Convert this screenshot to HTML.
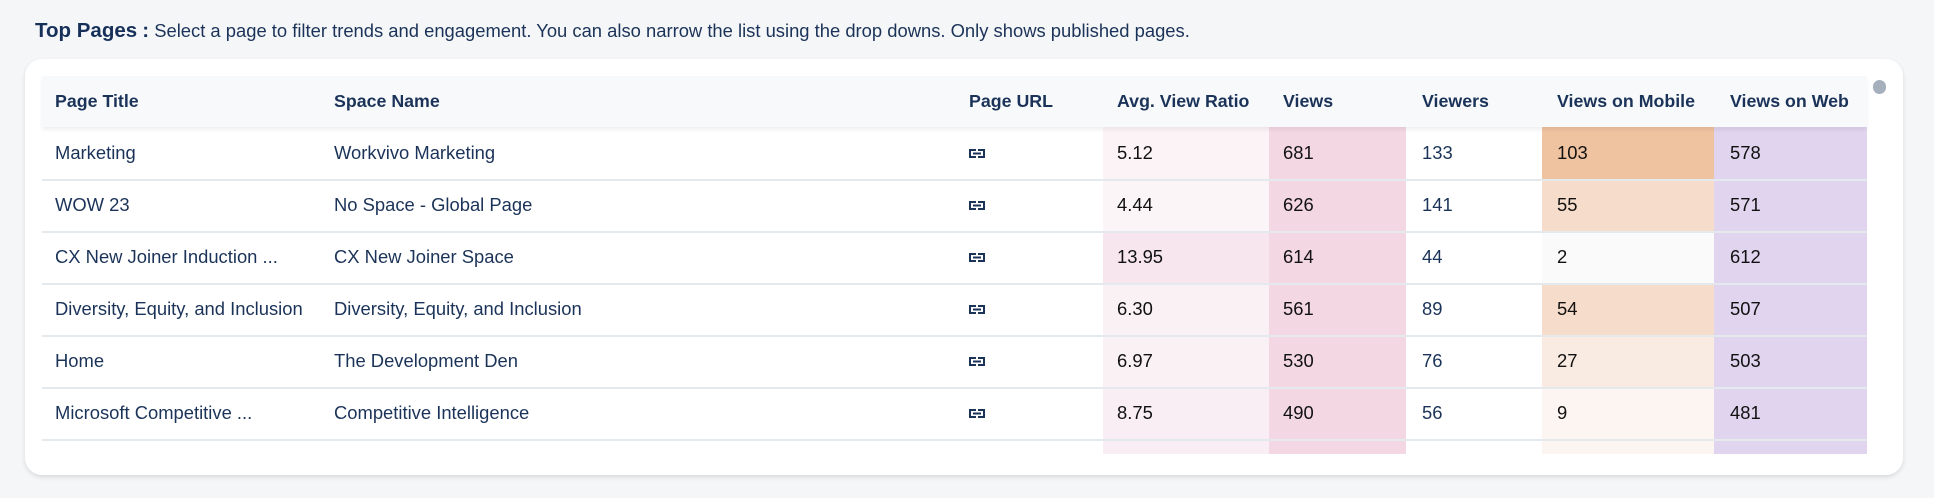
<!DOCTYPE html>
<html><head><meta charset="utf-8"><style>
*{margin:0;padding:0;box-sizing:border-box}
body{width:1934px;height:498px;background:#f5f6f8;font-family:"Liberation Sans",sans-serif;color:#1b3358;position:relative;overflow:hidden}
.hd{position:absolute;left:35px;top:19px;font-size:18.4px;white-space:nowrap}
.hd b{font-size:20.5px;font-weight:bold;color:#17305a}
.card{position:absolute;left:25px;top:59px;width:1878px;height:416px;background:#fff;border-radius:17px;box-shadow:0 2px 5px rgba(0,0,0,.12)}
.dot{position:absolute;left:1873px;top:80px;width:13px;height:14px;border-radius:7px;background:#a6afbc}
.tbl{position:absolute;left:42px;top:76px;width:1825px}
.row{position:absolute;left:0;width:1825px;height:52px}
.head{top:0;height:51px;background:#f8f9fb;box-shadow:0 3px 4px rgba(0,0,0,.06);font-weight:bold;font-size:17.8px;z-index:2}
.c{position:absolute;top:0;height:100%;display:flex;align-items:center;font-size:18.4px;white-space:nowrap}
.head .c{font-size:17.8px}
.line{position:absolute;left:0;width:1825px;height:2px;background:#e4e9ee;z-index:1}
.bg{position:absolute}
.ic{width:16px;height:9px}
</style></head><body>
<div class="hd"><b>Top Pages</b> <b>:</b> Select a page to filter trends and engagement. You can also narrow the list using the drop downs. Only shows published pages.</div>
<div class="card"></div>
<div class="dot"></div>
<div class="tbl">
<div class="row head">
<div class="c" style="left:13px">Page Title</div>
<div class="c" style="left:292px">Space Name</div>
<div class="c" style="left:927px">Page URL</div>
<div class="c" style="left:1075px">Avg. View Ratio</div>
<div class="c" style="left:1241px">Views</div>
<div class="c" style="left:1380px">Viewers</div>
<div class="c" style="left:1515px">Views on Mobile</div>
<div class="c" style="left:1688px">Views on Web</div>
</div>
<div class="bg" style="left:1061px;top:51px;width:166px;height:53px;background:#fbf3f6"></div>
<div class="bg" style="left:1061px;top:104px;width:166px;height:52px;background:#fbf5f7"></div>
<div class="bg" style="left:1061px;top:156px;width:166px;height:52px;background:#f7e6ee"></div>
<div class="bg" style="left:1061px;top:208px;width:166px;height:52px;background:#faf1f4"></div>
<div class="bg" style="left:1061px;top:260px;width:166px;height:52px;background:#f9f1f4"></div>
<div class="bg" style="left:1061px;top:312px;width:166px;height:66px;background:#f9eef3"></div>
<div class="bg" style="left:1227px;top:51px;width:137px;height:327px;background:#f3d7e3"></div>
<div class="bg" style="left:1500px;top:51px;width:172px;height:53px;background:#efc3a0"></div>
<div class="bg" style="left:1500px;top:104px;width:172px;height:52px;background:#f6dcca"></div>
<div class="bg" style="left:1500px;top:156px;width:172px;height:52px;background:#fbfafa"></div>
<div class="bg" style="left:1500px;top:208px;width:172px;height:52px;background:#f5dccb"></div>
<div class="bg" style="left:1500px;top:260px;width:172px;height:52px;background:#faebe2"></div>
<div class="bg" style="left:1500px;top:312px;width:172px;height:66px;background:#fcf5f1"></div>
<div class="bg" style="left:1672px;top:51px;width:153px;height:327px;background:#e0d4ee"></div>
<div class="line" style="top:103px"></div>
<div class="line" style="top:155px"></div>
<div class="line" style="top:207px"></div>
<div class="line" style="top:259px"></div>
<div class="line" style="top:311px"></div>
<div class="line" style="top:363px"></div>

<div class="row" style="top:51px;z-index:1">
<div class="c" style="left:13px">Marketing</div><div class="c" style="left:292px">Workvivo Marketing</div>
<div class="c" style="left:927px"><svg class="ic" viewBox="0 0 16 9"><path d="M7 1H1v7h6M9 1h6v7H9M4 4.5h8" fill="none" stroke="#1b3358" stroke-width="2"/></svg></div>
<div class="c" style="left:1075px;color:#111">5.12</div><div class="c" style="left:1241px;color:#111">681</div><div class="c" style="left:1380px">133</div><div class="c" style="left:1515px;color:#111">103</div><div class="c" style="left:1688px;color:#111">578</div></div>
<div class="row" style="top:103px;z-index:1">
<div class="c" style="left:13px">WOW 23</div><div class="c" style="left:292px">No Space - Global Page</div>
<div class="c" style="left:927px"><svg class="ic" viewBox="0 0 16 9"><path d="M7 1H1v7h6M9 1h6v7H9M4 4.5h8" fill="none" stroke="#1b3358" stroke-width="2"/></svg></div>
<div class="c" style="left:1075px;color:#111">4.44</div><div class="c" style="left:1241px;color:#111">626</div><div class="c" style="left:1380px">141</div><div class="c" style="left:1515px;color:#111">55</div><div class="c" style="left:1688px;color:#111">571</div></div>
<div class="row" style="top:155px;z-index:1">
<div class="c" style="left:13px">CX New Joiner Induction ...</div><div class="c" style="left:292px">CX New Joiner Space</div>
<div class="c" style="left:927px"><svg class="ic" viewBox="0 0 16 9"><path d="M7 1H1v7h6M9 1h6v7H9M4 4.5h8" fill="none" stroke="#1b3358" stroke-width="2"/></svg></div>
<div class="c" style="left:1075px;color:#111">13.95</div><div class="c" style="left:1241px;color:#111">614</div><div class="c" style="left:1380px">44</div><div class="c" style="left:1515px;color:#111">2</div><div class="c" style="left:1688px;color:#111">612</div></div>
<div class="row" style="top:207px;z-index:1">
<div class="c" style="left:13px">Diversity, Equity, and Inclusion</div><div class="c" style="left:292px">Diversity, Equity, and Inclusion</div>
<div class="c" style="left:927px"><svg class="ic" viewBox="0 0 16 9"><path d="M7 1H1v7h6M9 1h6v7H9M4 4.5h8" fill="none" stroke="#1b3358" stroke-width="2"/></svg></div>
<div class="c" style="left:1075px;color:#111">6.30</div><div class="c" style="left:1241px;color:#111">561</div><div class="c" style="left:1380px">89</div><div class="c" style="left:1515px;color:#111">54</div><div class="c" style="left:1688px;color:#111">507</div></div>
<div class="row" style="top:259px;z-index:1">
<div class="c" style="left:13px">Home</div><div class="c" style="left:292px">The Development Den</div>
<div class="c" style="left:927px"><svg class="ic" viewBox="0 0 16 9"><path d="M7 1H1v7h6M9 1h6v7H9M4 4.5h8" fill="none" stroke="#1b3358" stroke-width="2"/></svg></div>
<div class="c" style="left:1075px;color:#111">6.97</div><div class="c" style="left:1241px;color:#111">530</div><div class="c" style="left:1380px">76</div><div class="c" style="left:1515px;color:#111">27</div><div class="c" style="left:1688px;color:#111">503</div></div>
<div class="row" style="top:311px;z-index:1">
<div class="c" style="left:13px">Microsoft Competitive ...</div><div class="c" style="left:292px">Competitive Intelligence</div>
<div class="c" style="left:927px"><svg class="ic" viewBox="0 0 16 9"><path d="M7 1H1v7h6M9 1h6v7H9M4 4.5h8" fill="none" stroke="#1b3358" stroke-width="2"/></svg></div>
<div class="c" style="left:1075px;color:#111">8.75</div><div class="c" style="left:1241px;color:#111">490</div><div class="c" style="left:1380px">56</div><div class="c" style="left:1515px;color:#111">9</div><div class="c" style="left:1688px;color:#111">481</div></div>
</div>
</body></html>
